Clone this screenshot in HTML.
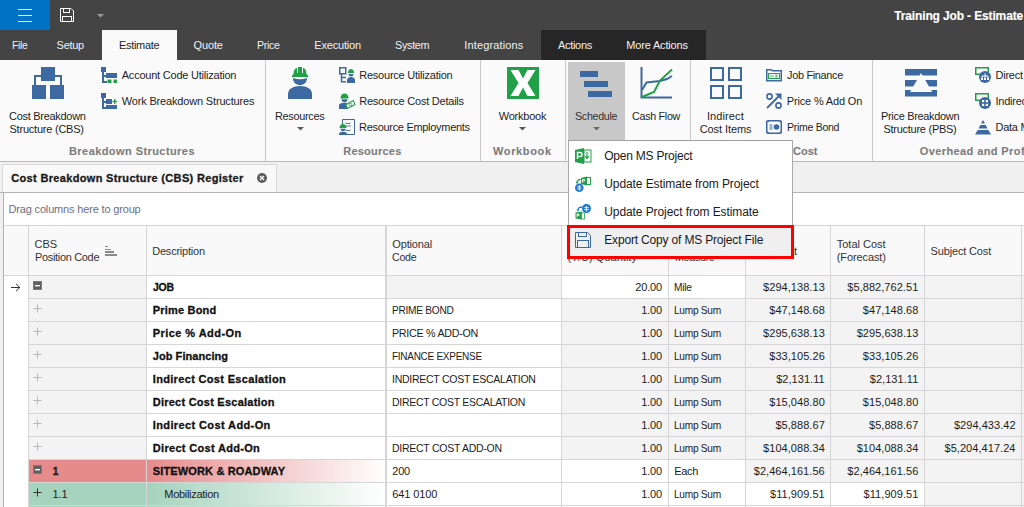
<!DOCTYPE html><html><head><meta charset="utf-8"><style>
html,body{margin:0;padding:0;width:1024px;height:507px;overflow:hidden;background:#f9f9f9;}
body{position:relative;font-family:"Liberation Sans", sans-serif;}
.t{position:absolute;white-space:nowrap;}
.b{position:absolute;}
.s{position:absolute;overflow:visible;}
</style></head><body>
<div class="b" style="left:0px;top:0px;width:1024px;height:60px;background:#444444;"></div>
<div class="b" style="left:0px;top:0px;width:50px;height:30px;background:#0072c6;"></div>
<div class="b" style="left:18px;top:9px;width:14px;height:1px;background:#ffffff;"></div>
<div class="b" style="left:18px;top:15px;width:14px;height:1px;background:#ffffff;"></div>
<div class="b" style="left:18px;top:21px;width:14px;height:1px;background:#ffffff;"></div>
<svg class="s" style="left:60px;top:8px" width="14" height="14" viewBox="0 0 14 14"><path d="M0.5 0.5H11L13.5 3V13.5H0.5Z" fill="none" stroke="#fff" stroke-width="1"/><rect x="3.5" y="0.5" width="6" height="4" fill="none" stroke="#fff"/><rect x="2.5" y="8.5" width="9" height="5" fill="none" stroke="#fff"/></svg>
<svg class="s" style="left:97px;top:14px" width="7" height="4" viewBox="0 0 7 4"><path d="M0 0H7L3.5 3.5Z" fill="#9a9a9a"/></svg>
<div class="t" style="left:894.25px;top:9.64px;font-size:12px;line-height:12px;font-weight:bold;-webkit-text-stroke:0.15px #ffffff;color:#ffffff;letter-spacing:-0.14px;">Training Job - Estimate</div>
<div class="b" style="left:541px;top:30px;width:165px;height:30px;background:#262626;"></div>
<div class="b" style="left:102px;top:30px;width:75px;height:30px;background:#fafafa;"></div>
<div class="t" style="left:11.50px;top:39.69px;font-size:11px;line-height:11px;color:#f2f2f2;letter-spacing:-0.3px;transform:scaleX(0.9377);transform-origin:0.00px 0;">File</div>
<div class="t" style="left:56.60px;top:39.69px;font-size:11px;line-height:11px;color:#f2f2f2;letter-spacing:-0.287px;">Setup</div>
<div class="t" style="left:193.60px;top:39.69px;font-size:11px;line-height:11px;color:#f2f2f2;letter-spacing:-0.15px;">Quote</div>
<div class="t" style="left:257.00px;top:39.69px;font-size:11px;line-height:11px;color:#f2f2f2;letter-spacing:-0.3px;transform:scaleX(0.9613);transform-origin:0.00px 0;">Price</div>
<div class="t" style="left:314.25px;top:39.69px;font-size:11px;line-height:11px;color:#f2f2f2;letter-spacing:-0.188px;">Execution</div>
<div class="t" style="left:395.25px;top:39.69px;font-size:11px;line-height:11px;color:#f2f2f2;letter-spacing:-0.3px;transform:scaleX(0.9822);transform-origin:0.00px 0;">System</div>
<div class="t" style="left:464.25px;top:39.69px;font-size:11px;line-height:11px;color:#f2f2f2;letter-spacing:0.136px;">Integrations</div>
<div class="t" style="left:557.75px;top:39.69px;font-size:11px;line-height:11px;color:#f2f2f2;letter-spacing:-0.3px;transform:scaleX(0.9978);transform-origin:0.00px 0;">Actions</div>
<div class="t" style="left:626.25px;top:39.69px;font-size:11px;line-height:11px;color:#f2f2f2;letter-spacing:-0.17px;">More Actions</div>
<div class="t" style="left:118.50px;top:39.69px;font-size:11px;line-height:11px;color:#1e1e1e;letter-spacing:-0.3px;transform:scaleX(0.9963);transform-origin:0.00px 0;">Estimate</div>
<div class="b" style="left:0px;top:60px;width:1024px;height:101px;background:#fafafa;"></div>
<div class="b" style="left:0px;top:161px;width:1024px;height:1px;background:#b9b9b9;"></div>
<div class="b" style="left:265px;top:60px;width:1px;height:101px;background:#c9c9c9;"></div>
<div class="b" style="left:480px;top:60px;width:1px;height:101px;background:#c9c9c9;"></div>
<div class="b" style="left:565px;top:60px;width:1px;height:101px;background:#c9c9c9;"></div>
<div class="b" style="left:690px;top:60px;width:1px;height:101px;background:#c9c9c9;"></div>
<div class="b" style="left:872px;top:60px;width:1px;height:101px;background:#c9c9c9;"></div>
<div class="t" style="left:69.00px;top:145.89px;font-size:11px;line-height:11px;font-weight:bold;-webkit-text-stroke:0.1px #7d7d7d;color:#7d7d7d;letter-spacing:0.428px;">Breakdown Structures</div>
<div class="t" style="left:343.25px;top:145.89px;font-size:11px;line-height:11px;font-weight:bold;-webkit-text-stroke:0.1px #7d7d7d;color:#7d7d7d;letter-spacing:0.219px;">Resources</div>
<div class="t" style="left:493.00px;top:145.89px;font-size:11px;line-height:11px;font-weight:bold;-webkit-text-stroke:0.1px #7d7d7d;color:#7d7d7d;letter-spacing:0.636px;">Workbook</div>
<div class="t" style="left:604.00px;top:145.89px;font-size:11px;line-height:11px;font-weight:bold;-webkit-text-stroke:0.1px #7d7d7d;color:#7d7d7d;letter-spacing:0px;">Schedule</div>
<div class="t" style="left:793.00px;top:145.89px;font-size:11px;line-height:11px;font-weight:bold;-webkit-text-stroke:0.1px #7d7d7d;color:#7d7d7d;letter-spacing:0.0px;">Cost</div>
<div class="t" style="left:740.00px;top:145.89px;font-size:11px;line-height:11px;font-weight:bold;-webkit-text-stroke:0.1px #7d7d7d;color:#7d7d7d;letter-spacing:0px;">Job</div>
<div class="t" style="left:919.75px;top:145.89px;font-size:11px;line-height:11px;font-weight:bold;-webkit-text-stroke:0.1px #7d7d7d;color:#7d7d7d;letter-spacing:0.4px;">Overhead and Profit</div>
<svg class="s" style="left:32px;top:67px" width="32" height="32" viewBox="0 0 32 32"><rect x="9" y="0" width="14" height="14" fill="#3d69a2"/><path d="M3 18V9H29V18" fill="none" stroke="#3d69a2" stroke-width="2"/><rect x="0" y="18" width="14" height="14" fill="#3d69a2"/><rect x="18" y="18" width="14" height="14" fill="#3d69a2"/></svg>
<div class="t" style="left:9.00px;top:110.69px;font-size:11px;line-height:11px;color:#1e1e1e;letter-spacing:-0.288px;">Cost Breakdown</div>
<div class="t" style="left:9.50px;top:123.69px;font-size:11px;line-height:11px;color:#1e1e1e;letter-spacing:-0.223px;">Structure (CBS)</div>
<svg class="s" style="left:101px;top:67px" width="16" height="16" viewBox="0 0 16 16"><rect x="0" y="0" width="5" height="5" fill="#3d69a2"/><path d="M2 5V15H6M2 9H6" stroke="#3d69a2" stroke-width="2" fill="none"/><rect x="5" y="6" width="11" height="5" fill="#3d69a2"/><rect x="6.5" y="12.5" width="4" height="3.5" fill="#22a048"/><rect x="12.5" y="12.5" width="3.5" height="3.5" fill="#22a048"/></svg>
<div class="t" style="left:121.75px;top:69.69px;font-size:11px;line-height:11px;color:#1e1e1e;letter-spacing:-0.223px;">Account Code Utilization</div>
<svg class="s" style="left:101px;top:93px" width="16" height="16" viewBox="0 0 16 16"><rect x="0" y="0" width="5" height="5" fill="#3d69a2"/><path d="M2 5V15H6M2 9H6" stroke="#3d69a2" stroke-width="2" fill="none"/><rect x="5" y="6" width="6" height="5" fill="#3d69a2"/><rect x="5" y="12" width="11" height="4" fill="#3d69a2"/><path d="M11.5 8.5H16M13.75 6V11" stroke="#22a048" stroke-width="1.3"/></svg>
<div class="t" style="left:121.75px;top:95.89px;font-size:11px;line-height:11px;color:#1e1e1e;letter-spacing:-0.167px;">Work Breakdown Structures</div>
<svg class="s" style="left:288px;top:67px" width="24" height="32" viewBox="0 0 24 32"><path d="M5.5 7C5.5 3.5 7 1.5 9 0.8V6H10V0H14V6H15V0.8C17 1.5 18.5 3.5 18.5 7L20 8.5V10H4V8.5Z" fill="#22a048"/><path d="M5 11Q12 13.5 19 11C19 15.5 16 18 12 18C8 18 5 15.5 5 11Z" fill="#3d69a2"/><path d="M0 32V27C0 22 5 19 12 19C19 19 24 22 24 27V32Z" fill="#3d69a2"/></svg>
<div class="t" style="left:274.70px;top:110.69px;font-size:11px;line-height:11px;color:#1e1e1e;letter-spacing:-0.3px;transform:scaleX(0.9895);transform-origin:0.00px 0;">Resources</div>
<svg class="s" style="left:297px;top:127px" width="7" height="4" viewBox="0 0 7 4"><path d="M0 0H7L3.5 3.5Z" fill="#5a5a5a"/></svg>
<svg class="s" style="left:339px;top:67px" width="16" height="16" viewBox="0 0 16 16"><rect x="0.75" y="0.75" width="6" height="6" fill="none" stroke="#3d69a2" stroke-width="1.5"/><path d="M2.5 7V15.5M2.5 10.5H7M2.5 14.75H7" stroke="#3d69a2" stroke-width="1.5" fill="none"/><path d="M9 6C9 3 10.5 2 12 2C13.5 2 15 3 15 6Z" fill="#22a048"/><path d="M9.5 7H14.5C14.5 8.5 13.5 9.5 12 9.5C10.5 9.5 9.5 8.5 9.5 7Z" fill="#3d69a2"/><path d="M8 16V13C8 11 10 10 12 10C14 10 16 11 16 13V16Z" fill="#3d69a2"/></svg>
<div class="t" style="left:359.25px;top:69.69px;font-size:11px;line-height:11px;color:#1e1e1e;letter-spacing:-0.23px;">Resource Utilization</div>
<svg class="s" style="left:339px;top:93px" width="16" height="16" viewBox="0 0 16 16"><path d="M1.5 5.5C1.5 2.2 3.2 0.5 5.5 0.5C7.8 0.5 9.5 2.2 9.5 5.5Z" fill="#22a048"/><path d="M2.5 6.3H8.5C8.5 8 7.3 9.3 5.5 9.3C3.7 9.3 2.5 8 2.5 6.3Z" fill="#3d69a2"/><path d="M0 16V12.5C0 10.8 2 9.8 5.5 9.8C6.5 9.8 7.3 9.9 8 10.2V16Z" fill="#3d69a2"/><path d="M6.8 11.8L14.2 7.6L16 11.6L8.6 15.6Z" fill="#fff" stroke="#22a048" stroke-width="1.1"/><circle cx="11.4" cy="11.6" r="1.4" fill="none" stroke="#22a048" stroke-width="0.9"/></svg>
<div class="t" style="left:359.25px;top:95.89px;font-size:11px;line-height:11px;color:#1e1e1e;letter-spacing:-0.231px;">Resource Cost Details</div>
<svg class="s" style="left:339px;top:119px" width="16" height="16" viewBox="0 0 16 16"><path d="M3.5 5V0.5H15.5V15.5H8" fill="none" stroke="#3d69a2" stroke-width="1"/><path d="M7 3.5V4.5H11V3.5M7 7H12M7 10.5V11.5H11V10.5" stroke="#5f7fae" stroke-width="1" fill="none"/><path d="M0.5 9C0.5 6.5 2 5 4 5C6 5 7.5 6.5 7.5 9Z" fill="#22a048"/><path d="M1.5 9.8H6.5C6.5 11.2 5.5 12.2 4 12.2C2.5 12.2 1.5 11.2 1.5 9.8Z" fill="#3d69a2"/><path d="M0 16V14.8C0 13.5 1.8 12.8 4 12.8C6.2 12.8 8 13.5 8 14.8V16Z" fill="#3d69a2"/></svg>
<div class="t" style="left:359.25px;top:121.89px;font-size:11px;line-height:11px;color:#1e1e1e;letter-spacing:-0.3px;transform:scaleX(0.9995);transform-origin:0.00px 0;">Resource Employments</div>
<svg class="s" style="left:507px;top:67px" width="32" height="32" viewBox="0 0 32 32"><rect x="0" y="0" width="32" height="32" fill="#22a048"/><path d="M3.5 3H11.5L16 11.5L20.5 3H28.5L20.5 16L28.5 29H20.5L16 20.5L11.5 29H3.5L11.5 16Z" fill="#fff"/></svg>
<div class="t" style="left:498.80px;top:110.69px;font-size:11px;line-height:11px;color:#1e1e1e;letter-spacing:-0.243px;">Workbook</div>
<svg class="s" style="left:519px;top:127px" width="7" height="4" viewBox="0 0 7 4"><path d="M0 0H7L3.5 3.5Z" fill="#5a5a5a"/></svg>
<div class="b" style="left:568px;top:62px;width:57px;height:80px;background:#c8c8c8;"></div>
<svg class="s" style="left:580px;top:71px" width="32" height="26" viewBox="0 0 32 26"><rect x="0" y="0" width="18" height="6" fill="#3d69a2"/><rect x="4" y="10" width="24" height="6" fill="#3d69a2"/><rect x="8" y="20" width="24" height="6" fill="#3d69a2"/></svg>
<div class="t" style="left:574.70px;top:110.69px;font-size:11px;line-height:11px;color:#333;letter-spacing:-0.3px;transform:scaleX(0.9709);transform-origin:0.00px 0;">Schedule</div>
<svg class="s" style="left:593px;top:127px" width="7" height="4" viewBox="0 0 7 4"><path d="M0 0H7L3.5 3.5Z" fill="#6a6a6a"/></svg>
<svg class="s" style="left:640px;top:67px" width="33" height="32" viewBox="0 0 33 32"><path d="M1.5 0V30.5H32" fill="none" stroke="#3d69a2" stroke-width="2"/><path d="M2 23L6.5 15.5L20 14L27 12L32 9" fill="none" stroke="#3d69a2" stroke-width="2"/><path d="M2 30L14 25L20 13.5L32 2.5" fill="none" stroke="#22a048" stroke-width="2"/></svg>
<div class="t" style="left:631.90px;top:110.69px;font-size:11px;line-height:11px;color:#1e1e1e;letter-spacing:-0.3px;transform:scaleX(0.9758);transform-origin:0.00px 0;">Cash Flow</div>
<svg class="s" style="left:710px;top:67px" width="32" height="32" viewBox="0 0 32 32"><rect x="1" y="1" width="12" height="12" fill="none" stroke="#3d69a2" stroke-width="2"/><rect x="19" y="1" width="12" height="12" fill="none" stroke="#3d69a2" stroke-width="2"/><rect x="1" y="19" width="12" height="12" fill="none" stroke="#3d69a2" stroke-width="2"/><rect x="19" y="19" width="12" height="12" fill="none" stroke="#3d69a2" stroke-width="2"/></svg>
<div class="t" style="left:706.90px;top:110.69px;font-size:11px;line-height:11px;color:#1e1e1e;letter-spacing:0.104px;">Indirect</div>
<div class="t" style="left:699.70px;top:123.69px;font-size:11px;line-height:11px;color:#1e1e1e;letter-spacing:-0.081px;">Cost Items</div>
<svg class="s" style="left:766px;top:67px" width="16" height="16" viewBox="0 0 16 16"><path d="M0.75 13.75V2.75H5.5L6.5 3.75H15.25V13.75Z" fill="none" stroke="#3d69a2" stroke-width="1.5"/><rect x="2.5" y="6.5" width="11" height="5" fill="none" stroke="#22a048" stroke-width="1"/><path d="M5 8V10M7 8V10M9 8H11V10H9" stroke="#22a048" stroke-width="0.8" fill="none"/></svg>
<div class="t" style="left:786.75px;top:69.69px;font-size:11px;line-height:11px;color:#1e1e1e;letter-spacing:-0.3px;transform:scaleX(0.9890);transform-origin:0.00px 0;">Job Finance</div>
<svg class="s" style="left:766px;top:93px" width="16" height="16" viewBox="0 0 16 16"><circle cx="3.5" cy="3.5" r="2.6" fill="none" stroke="#3d69a2" stroke-width="1.6"/><circle cx="12.5" cy="12.5" r="2.6" fill="none" stroke="#3d69a2" stroke-width="1.6"/><path d="M1 15L14.5 1.5" fill="none" stroke="#3d69a2" stroke-width="1.8"/><path d="M9 0.5H15.5V7Z" fill="#3d69a2"/></svg>
<div class="t" style="left:786.75px;top:95.89px;font-size:11px;line-height:11px;color:#1e1e1e;letter-spacing:-0.163px;">Price % Add On</div>
<svg class="s" style="left:766px;top:119px" width="16" height="16" viewBox="0 0 16 16"><path d="M2 1.75H14A0.5 0.5 0 0 0 14.25 2V2.5H15.25V13.5H14.25V14A0.5 0.5 0 0 0 14 14.25H2V13.5H0.75V2.5H2Z" fill="none" stroke="#3d69a2" stroke-width="1.5"/><circle cx="10.5" cy="8" r="2.8" fill="#3d69a2"/><path d="M3.5 6H6.5M3.5 8H6.5M3.5 10H6.5" stroke="#3d69a2" stroke-width="1"/></svg>
<div class="t" style="left:786.75px;top:121.89px;font-size:11px;line-height:11px;color:#1e1e1e;letter-spacing:-0.3px;transform:scaleX(0.9580);transform-origin:0.00px 0;">Prime Bond</div>
<svg class="s" style="left:905px;top:69px" width="32" height="28" viewBox="0 0 32 28"><rect x="0" y="0" width="32" height="6.5" fill="#3d69a2"/><rect x="0" y="11" width="32" height="6.5" fill="#3d69a2"/><rect x="0" y="21" width="32" height="6.5" fill="#3d69a2"/><path d="M16 4L27.25 23H5Z" fill="#f8f8f8"/></svg>
<div class="t" style="left:881.25px;top:110.69px;font-size:11px;line-height:11px;color:#1e1e1e;letter-spacing:-0.3px;transform:scaleX(0.9946);transform-origin:0.00px 0;">Price Breakdown</div>
<div class="t" style="left:883.50px;top:123.69px;font-size:11px;line-height:11px;color:#1e1e1e;letter-spacing:-0.268px;">Structure (PBS)</div>
<svg class="s" style="left:975px;top:67px" width="16" height="16" viewBox="0 0 16 16"><rect x="0.75" y="0.75" width="12.5" height="6.5" fill="none" stroke="#22a048" stroke-width="1.5"/><circle cx="10" cy="10" r="6" fill="#3d69a2"/><path d="M10 6.5V9M7 9H13M7 9V11M10 9V11M13 9V11" stroke="#fff" stroke-width="1" fill="none"/><rect x="6" y="11" width="2" height="2" fill="#fff"/><rect x="9" y="11" width="2" height="2" fill="#fff"/><rect x="12" y="11" width="2" height="2" fill="#fff"/></svg>
<div class="t" style="left:995.50px;top:69.69px;font-size:11px;line-height:11px;color:#1e1e1e;letter-spacing:-0.25px;">Direct Cost Add-On</div>
<svg class="s" style="left:975px;top:93px" width="16" height="16" viewBox="0 0 16 16"><rect x="0.75" y="0.75" width="12.5" height="6.5" fill="none" stroke="#22a048" stroke-width="1.5"/><circle cx="10" cy="10" r="6" fill="#3d69a2"/><rect x="7" y="7" width="2.2" height="2.2" fill="#fff"/><rect x="10.8" y="7" width="2.2" height="2.2" fill="#fff"/><rect x="7" y="10.8" width="2.2" height="2.2" fill="#fff"/><rect x="10.8" y="10.8" width="2.2" height="2.2" fill="#fff"/></svg>
<div class="t" style="left:995.50px;top:95.89px;font-size:11px;line-height:11px;color:#1e1e1e;letter-spacing:-0.25px;">Indirect Cost Add-On</div>
<svg class="s" style="left:975px;top:119px" width="16" height="16" viewBox="0 0 16 16"><path d="M8 1L10 4.5H6Z M5.3 6H10.7L12.5 9.5H3.5Z M2.7 11H13.3L16 15.5H0Z" fill="#3d69a2"/></svg>
<div class="t" style="left:995.50px;top:121.89px;font-size:11px;line-height:11px;color:#1e1e1e;letter-spacing:-0.25px;">Data Model</div>
<div class="b" style="left:0px;top:162px;width:1024px;height:31px;background:#f0f0f0;"></div>
<div class="b" style="left:2px;top:164px;width:275px;height:29px;background:#f9f9f9;box-sizing:border-box;border:1px solid #d9d9d9;border-bottom:none;"></div>
<div class="b" style="left:0px;top:192px;width:1024px;height:1px;background:#b4b4b4;"></div>
<div class="t" style="left:11.25px;top:172.69px;font-size:11px;line-height:11px;font-weight:bold;-webkit-text-stroke:0.3px #1a1a1a;color:#1a1a1a;letter-spacing:0.332px;">Cost Breakdown Structure (CBS) Register</div>
<svg class="s" style="left:257px;top:173px" width="10" height="10" viewBox="0 0 10 10"><circle cx="5" cy="5" r="5" fill="#5c5c5c"/><path d="M3 3L7 7M7 3L3 7" stroke="#fff" stroke-width="1.3"/></svg>
<div class="b" style="left:0px;top:193px;width:1024px;height:314px;background:#f0f0f0;"></div>
<div class="b" style="left:3px;top:193px;width:1021px;height:314px;background:#ffffff;box-sizing:border-box;border-left:1px solid #b0b0b0;"></div>
<div class="t" style="left:8.50px;top:204.44px;font-size:11px;line-height:11px;color:#6e6e84;letter-spacing:-0.165px;">Drag columns here to group</div>
<div class="b" style="left:4px;top:225px;width:1020px;height:1px;background:#d6d6d6;"></div>
<div class="b" style="left:4px;top:226px;width:1020px;height:49px;background:#f9f9f9;"></div>
<div class="b" style="left:4px;top:275px;width:1020px;height:1px;background:#d6d6d6;"></div>
<div class="t" style="left:34.50px;top:238.69px;font-size:11px;line-height:11px;color:#333333;letter-spacing:0px;">CBS</div>
<div class="t" style="left:34.50px;top:251.69px;font-size:11px;line-height:11px;color:#333333;letter-spacing:-0.3px;transform:scaleX(0.9938);transform-origin:0.00px 0;">Position Code</div>
<div class="b" style="left:105px;top:246px;width:3px;height:1px;background:#8a8a8a;"></div>
<div class="b" style="left:105px;top:249px;width:6px;height:1px;background:#8a8a8a;"></div>
<div class="b" style="left:105px;top:251px;width:9px;height:2px;background:#8a8a8a;"></div>
<div class="b" style="left:105px;top:254px;width:12px;height:2px;background:#8a8a8a;"></div>
<div class="t" style="left:152.25px;top:245.69px;font-size:11px;line-height:11px;color:#333333;letter-spacing:-0.225px;">Description</div>
<div class="t" style="left:392.25px;top:238.69px;font-size:11px;line-height:11px;color:#333333;letter-spacing:-0.143px;">Optional</div>
<div class="t" style="left:392.25px;top:251.69px;font-size:11px;line-height:11px;color:#333333;letter-spacing:-0.3px;transform:scaleX(0.9665);transform-origin:0.00px 0;">Code</div>
<div class="t" style="left:567.00px;top:238.69px;font-size:11px;line-height:11px;color:#333333;letter-spacing:-0.25px;">Quantity</div>
<div class="t" style="left:567.50px;top:251.69px;font-size:11px;line-height:11px;color:#333333;letter-spacing:0.029px;">(T/U) Quantity</div>
<div class="t" style="left:674.00px;top:238.69px;font-size:11px;line-height:11px;color:#333333;letter-spacing:-0.25px;">Unit of</div>
<div class="t" style="left:674.75px;top:251.69px;font-size:11px;line-height:11px;color:#333333;letter-spacing:-0.3px;transform:scaleX(0.9707);transform-origin:0.00px 0;">Measure</div>
<div class="t" style="left:753.75px;top:245.69px;font-size:11px;line-height:11px;color:#333333;letter-spacing:-0.25px;">Unit Cost</div>
<div class="t" style="left:836.75px;top:238.69px;font-size:11px;line-height:11px;color:#333333;letter-spacing:-0.014px;">Total Cost</div>
<div class="t" style="left:836.75px;top:251.69px;font-size:11px;line-height:11px;color:#333333;letter-spacing:-0.097px;">(Forecast)</div>
<div class="t" style="left:930.50px;top:245.69px;font-size:11px;line-height:11px;color:#333333;letter-spacing:-0.148px;">Subject Cost</div>
<div class="b" style="left:29px;top:276px;width:117px;height:22px;background:#f3f3f3;"></div>
<div class="b" style="left:147px;top:276px;width:239px;height:22px;background:#ffffff;"></div>
<div class="b" style="left:387px;top:276px;width:174px;height:22px;background:#f3f3f3;"></div>
<div class="b" style="left:562px;top:276px;width:106px;height:22px;background:#ffffff;"></div>
<div class="b" style="left:669px;top:276px;width:76px;height:22px;background:#ffffff;"></div>
<div class="b" style="left:746px;top:276px;width:84px;height:22px;background:#f3f3f3;"></div>
<div class="b" style="left:831px;top:276px;width:93px;height:22px;background:#f3f3f3;"></div>
<div class="b" style="left:925px;top:276px;width:96px;height:22px;background:#f3f3f3;"></div>
<div class="b" style="left:1022px;top:276px;width:2px;height:22px;background:#f3f3f3;"></div>
<div class="b" style="left:28px;top:298px;width:996px;height:1px;background:#d6d6d6;"></div>
<svg class="s" style="left:11px;top:283px" width="10" height="9" viewBox="0 0 10 9"><path d="M0 4.5H9M5 0.8L8.8 4.5L5 8.2" fill="none" stroke="#333" stroke-width="1"/></svg>
<svg class="s" style="left:33px;top:281px" width="9" height="9" viewBox="0 0 9 9"><rect x="0.5" y="0.5" width="8" height="8" fill="#5e5e5e" stroke="#7a7a7a"/><rect x="2" y="4" width="5" height="1.4" fill="#fff"/></svg>
<div class="t" style="left:152.75px;top:281.69px;font-size:11px;line-height:11px;font-weight:bold;-webkit-text-stroke:0.3px #111;color:#111;letter-spacing:-0.3px;transform:scaleX(0.9535);transform-origin:0.00px 0;">JOB</div>
<div class="t" style="left:635.30px;top:281.69px;font-size:11px;line-height:11px;color:#1c1c1c;letter-spacing:-0.2px;">20.00</div>
<div class="t" style="left:674.25px;top:281.69px;font-size:11px;line-height:11px;color:#1c1c1c;letter-spacing:-0.3px;transform:scaleX(0.9233);transform-origin:0.00px 0;">Mile</div>
<div class="t" style="left:763.08px;top:281.69px;font-size:11px;line-height:11px;color:#1c1c1c;letter-spacing:0.05px;">$294,138.13</div>
<div class="t" style="left:847.32px;top:281.69px;font-size:11px;line-height:11px;color:#1c1c1c;letter-spacing:0.05px;">$5,882,762.51</div>
<div class="b" style="left:29px;top:299px;width:117px;height:22px;background:#f3f3f3;"></div>
<div class="b" style="left:147px;top:299px;width:239px;height:22px;background:#ffffff;"></div>
<div class="b" style="left:387px;top:299px;width:174px;height:22px;background:#ffffff;"></div>
<div class="b" style="left:562px;top:299px;width:106px;height:22px;background:#f3f3f3;"></div>
<div class="b" style="left:669px;top:299px;width:76px;height:22px;background:#f3f3f3;"></div>
<div class="b" style="left:746px;top:299px;width:84px;height:22px;background:#f3f3f3;"></div>
<div class="b" style="left:831px;top:299px;width:93px;height:22px;background:#f3f3f3;"></div>
<div class="b" style="left:925px;top:299px;width:96px;height:22px;background:#f3f3f3;"></div>
<div class="b" style="left:1022px;top:299px;width:2px;height:22px;background:#f3f3f3;"></div>
<div class="b" style="left:28px;top:321px;width:996px;height:1px;background:#d6d6d6;"></div>
<svg class="s" style="left:33px;top:304px" width="9" height="9" viewBox="0 0 9 9"><path d="M4.5 0.5V8.5M0.5 4.5H8.5" stroke="#b8b8b8" stroke-width="1"/></svg>
<div class="t" style="left:152.75px;top:304.69px;font-size:11px;line-height:11px;font-weight:bold;-webkit-text-stroke:0.3px #111;color:#111;letter-spacing:0.194px;">Prime Bond</div>
<div class="t" style="left:392.25px;top:304.69px;font-size:11px;line-height:11px;color:#1c1c1c;letter-spacing:-0.3px;transform:scaleX(0.9227);transform-origin:0.00px 0;">PRIME BOND</div>
<div class="t" style="left:641.23px;top:304.69px;font-size:11px;line-height:11px;color:#1c1c1c;letter-spacing:-0.2px;">1.00</div>
<div class="t" style="left:674.25px;top:304.69px;font-size:11px;line-height:11px;color:#1c1c1c;letter-spacing:-0.3px;transform:scaleX(0.9238);transform-origin:0.00px 0;">Lump Sum</div>
<div class="t" style="left:769.25px;top:304.69px;font-size:11px;line-height:11px;color:#1c1c1c;letter-spacing:0.05px;">$47,148.68</div>
<div class="t" style="left:862.85px;top:304.69px;font-size:11px;line-height:11px;color:#1c1c1c;letter-spacing:0.05px;">$47,148.68</div>
<div class="b" style="left:29px;top:322px;width:117px;height:22px;background:#f3f3f3;"></div>
<div class="b" style="left:147px;top:322px;width:239px;height:22px;background:#ffffff;"></div>
<div class="b" style="left:387px;top:322px;width:174px;height:22px;background:#ffffff;"></div>
<div class="b" style="left:562px;top:322px;width:106px;height:22px;background:#f3f3f3;"></div>
<div class="b" style="left:669px;top:322px;width:76px;height:22px;background:#f3f3f3;"></div>
<div class="b" style="left:746px;top:322px;width:84px;height:22px;background:#f3f3f3;"></div>
<div class="b" style="left:831px;top:322px;width:93px;height:22px;background:#f3f3f3;"></div>
<div class="b" style="left:925px;top:322px;width:96px;height:22px;background:#f3f3f3;"></div>
<div class="b" style="left:1022px;top:322px;width:2px;height:22px;background:#f3f3f3;"></div>
<div class="b" style="left:28px;top:344px;width:996px;height:1px;background:#d6d6d6;"></div>
<svg class="s" style="left:33px;top:327px" width="9" height="9" viewBox="0 0 9 9"><path d="M4.5 0.5V8.5M0.5 4.5H8.5" stroke="#b8b8b8" stroke-width="1"/></svg>
<div class="t" style="left:152.75px;top:327.69px;font-size:11px;line-height:11px;font-weight:bold;-webkit-text-stroke:0.3px #111;color:#111;letter-spacing:0.442px;">Price % Add-On</div>
<div class="t" style="left:392.25px;top:327.69px;font-size:11px;line-height:11px;color:#1c1c1c;letter-spacing:-0.3px;transform:scaleX(0.9762);transform-origin:0.00px 0;">PRICE % ADD-ON</div>
<div class="t" style="left:641.23px;top:327.69px;font-size:11px;line-height:11px;color:#1c1c1c;letter-spacing:-0.2px;">1.00</div>
<div class="t" style="left:674.25px;top:327.69px;font-size:11px;line-height:11px;color:#1c1c1c;letter-spacing:-0.3px;transform:scaleX(0.9238);transform-origin:0.00px 0;">Lump Sum</div>
<div class="t" style="left:763.08px;top:327.69px;font-size:11px;line-height:11px;color:#1c1c1c;letter-spacing:0.05px;">$295,638.13</div>
<div class="t" style="left:856.67px;top:327.69px;font-size:11px;line-height:11px;color:#1c1c1c;letter-spacing:0.05px;">$295,638.13</div>
<div class="b" style="left:29px;top:345px;width:117px;height:22px;background:#f3f3f3;"></div>
<div class="b" style="left:147px;top:345px;width:239px;height:22px;background:#ffffff;"></div>
<div class="b" style="left:387px;top:345px;width:174px;height:22px;background:#ffffff;"></div>
<div class="b" style="left:562px;top:345px;width:106px;height:22px;background:#f3f3f3;"></div>
<div class="b" style="left:669px;top:345px;width:76px;height:22px;background:#f3f3f3;"></div>
<div class="b" style="left:746px;top:345px;width:84px;height:22px;background:#f3f3f3;"></div>
<div class="b" style="left:831px;top:345px;width:93px;height:22px;background:#f3f3f3;"></div>
<div class="b" style="left:925px;top:345px;width:96px;height:22px;background:#f3f3f3;"></div>
<div class="b" style="left:1022px;top:345px;width:2px;height:22px;background:#f3f3f3;"></div>
<div class="b" style="left:28px;top:367px;width:996px;height:1px;background:#d6d6d6;"></div>
<svg class="s" style="left:33px;top:350px" width="9" height="9" viewBox="0 0 9 9"><path d="M4.5 0.5V8.5M0.5 4.5H8.5" stroke="#b8b8b8" stroke-width="1"/></svg>
<div class="t" style="left:152.75px;top:350.69px;font-size:11px;line-height:11px;font-weight:bold;-webkit-text-stroke:0.3px #111;color:#111;letter-spacing:0.062px;">Job Financing</div>
<div class="t" style="left:392.25px;top:350.69px;font-size:11px;line-height:11px;color:#1c1c1c;letter-spacing:-0.3px;transform:scaleX(0.9086);transform-origin:0.00px 0;">FINANCE EXPENSE</div>
<div class="t" style="left:641.23px;top:350.69px;font-size:11px;line-height:11px;color:#1c1c1c;letter-spacing:-0.2px;">1.00</div>
<div class="t" style="left:674.25px;top:350.69px;font-size:11px;line-height:11px;color:#1c1c1c;letter-spacing:-0.3px;transform:scaleX(0.9238);transform-origin:0.00px 0;">Lump Sum</div>
<div class="t" style="left:769.25px;top:350.69px;font-size:11px;line-height:11px;color:#1c1c1c;letter-spacing:0.05px;">$33,105.26</div>
<div class="t" style="left:862.85px;top:350.69px;font-size:11px;line-height:11px;color:#1c1c1c;letter-spacing:0.05px;">$33,105.26</div>
<div class="b" style="left:29px;top:368px;width:117px;height:22px;background:#f3f3f3;"></div>
<div class="b" style="left:147px;top:368px;width:239px;height:22px;background:#ffffff;"></div>
<div class="b" style="left:387px;top:368px;width:174px;height:22px;background:#ffffff;"></div>
<div class="b" style="left:562px;top:368px;width:106px;height:22px;background:#f3f3f3;"></div>
<div class="b" style="left:669px;top:368px;width:76px;height:22px;background:#f3f3f3;"></div>
<div class="b" style="left:746px;top:368px;width:84px;height:22px;background:#f3f3f3;"></div>
<div class="b" style="left:831px;top:368px;width:93px;height:22px;background:#f3f3f3;"></div>
<div class="b" style="left:925px;top:368px;width:96px;height:22px;background:#f3f3f3;"></div>
<div class="b" style="left:1022px;top:368px;width:2px;height:22px;background:#f3f3f3;"></div>
<div class="b" style="left:28px;top:390px;width:996px;height:1px;background:#d6d6d6;"></div>
<svg class="s" style="left:33px;top:373px" width="9" height="9" viewBox="0 0 9 9"><path d="M4.5 0.5V8.5M0.5 4.5H8.5" stroke="#b8b8b8" stroke-width="1"/></svg>
<div class="t" style="left:152.75px;top:373.69px;font-size:11px;line-height:11px;font-weight:bold;-webkit-text-stroke:0.3px #111;color:#111;letter-spacing:0.33px;">Indirect Cost Escalation</div>
<div class="t" style="left:392.25px;top:373.69px;font-size:11px;line-height:11px;color:#1c1c1c;letter-spacing:-0.3px;transform:scaleX(0.9582);transform-origin:0.00px 0;">INDIRECT COST ESCALATION</div>
<div class="t" style="left:641.23px;top:373.69px;font-size:11px;line-height:11px;color:#1c1c1c;letter-spacing:-0.2px;">1.00</div>
<div class="t" style="left:674.25px;top:373.69px;font-size:11px;line-height:11px;color:#1c1c1c;letter-spacing:-0.3px;transform:scaleX(0.9238);transform-origin:0.00px 0;">Lump Sum</div>
<div class="t" style="left:776.18px;top:373.69px;font-size:11px;line-height:11px;color:#1c1c1c;letter-spacing:0.05px;">$2,131.11</div>
<div class="t" style="left:869.77px;top:373.69px;font-size:11px;line-height:11px;color:#1c1c1c;letter-spacing:0.05px;">$2,131.11</div>
<div class="b" style="left:29px;top:391px;width:117px;height:22px;background:#f3f3f3;"></div>
<div class="b" style="left:147px;top:391px;width:239px;height:22px;background:#ffffff;"></div>
<div class="b" style="left:387px;top:391px;width:174px;height:22px;background:#ffffff;"></div>
<div class="b" style="left:562px;top:391px;width:106px;height:22px;background:#f3f3f3;"></div>
<div class="b" style="left:669px;top:391px;width:76px;height:22px;background:#f3f3f3;"></div>
<div class="b" style="left:746px;top:391px;width:84px;height:22px;background:#f3f3f3;"></div>
<div class="b" style="left:831px;top:391px;width:93px;height:22px;background:#f3f3f3;"></div>
<div class="b" style="left:925px;top:391px;width:96px;height:22px;background:#f3f3f3;"></div>
<div class="b" style="left:1022px;top:391px;width:2px;height:22px;background:#f3f3f3;"></div>
<div class="b" style="left:28px;top:413px;width:996px;height:1px;background:#d6d6d6;"></div>
<svg class="s" style="left:33px;top:396px" width="9" height="9" viewBox="0 0 9 9"><path d="M4.5 0.5V8.5M0.5 4.5H8.5" stroke="#b8b8b8" stroke-width="1"/></svg>
<div class="t" style="left:152.75px;top:396.69px;font-size:11px;line-height:11px;font-weight:bold;-webkit-text-stroke:0.3px #111;color:#111;letter-spacing:0.238px;">Direct Cost Escalation</div>
<div class="t" style="left:392.25px;top:396.69px;font-size:11px;line-height:11px;color:#1c1c1c;letter-spacing:-0.3px;transform:scaleX(0.9537);transform-origin:0.00px 0;">DIRECT COST ESCALATION</div>
<div class="t" style="left:641.23px;top:396.69px;font-size:11px;line-height:11px;color:#1c1c1c;letter-spacing:-0.2px;">1.00</div>
<div class="t" style="left:674.25px;top:396.69px;font-size:11px;line-height:11px;color:#1c1c1c;letter-spacing:-0.3px;transform:scaleX(0.9238);transform-origin:0.00px 0;">Lump Sum</div>
<div class="t" style="left:769.25px;top:396.69px;font-size:11px;line-height:11px;color:#1c1c1c;letter-spacing:0.05px;">$15,048.80</div>
<div class="t" style="left:862.85px;top:396.69px;font-size:11px;line-height:11px;color:#1c1c1c;letter-spacing:0.05px;">$15,048.80</div>
<div class="b" style="left:29px;top:414px;width:117px;height:22px;background:#f3f3f3;"></div>
<div class="b" style="left:147px;top:414px;width:239px;height:22px;background:#ffffff;"></div>
<div class="b" style="left:387px;top:414px;width:174px;height:22px;background:#ffffff;"></div>
<div class="b" style="left:562px;top:414px;width:106px;height:22px;background:#f3f3f3;"></div>
<div class="b" style="left:669px;top:414px;width:76px;height:22px;background:#f3f3f3;"></div>
<div class="b" style="left:746px;top:414px;width:84px;height:22px;background:#f3f3f3;"></div>
<div class="b" style="left:831px;top:414px;width:93px;height:22px;background:#f3f3f3;"></div>
<div class="b" style="left:925px;top:414px;width:96px;height:22px;background:#f3f3f3;"></div>
<div class="b" style="left:1022px;top:414px;width:2px;height:22px;background:#f3f3f3;"></div>
<div class="b" style="left:28px;top:436px;width:996px;height:1px;background:#d6d6d6;"></div>
<svg class="s" style="left:33px;top:419px" width="9" height="9" viewBox="0 0 9 9"><path d="M4.5 0.5V8.5M0.5 4.5H8.5" stroke="#b8b8b8" stroke-width="1"/></svg>
<div class="t" style="left:152.75px;top:419.69px;font-size:11px;line-height:11px;font-weight:bold;-webkit-text-stroke:0.3px #111;color:#111;letter-spacing:0.389px;">Indirect Cost Add-On</div>
<div class="t" style="left:641.23px;top:419.69px;font-size:11px;line-height:11px;color:#1c1c1c;letter-spacing:-0.2px;">1.00</div>
<div class="t" style="left:674.25px;top:419.69px;font-size:11px;line-height:11px;color:#1c1c1c;letter-spacing:-0.3px;transform:scaleX(0.9238);transform-origin:0.00px 0;">Lump Sum</div>
<div class="t" style="left:775.43px;top:419.69px;font-size:11px;line-height:11px;color:#1c1c1c;letter-spacing:0.05px;">$5,888.67</div>
<div class="t" style="left:869.02px;top:419.69px;font-size:11px;line-height:11px;color:#1c1c1c;letter-spacing:0.05px;">$5,888.67</div>
<div class="t" style="left:953.88px;top:419.69px;font-size:11px;line-height:11px;color:#1c1c1c;letter-spacing:0.05px;">$294,433.42</div>
<div class="b" style="left:29px;top:437px;width:117px;height:22px;background:#f3f3f3;"></div>
<div class="b" style="left:147px;top:437px;width:239px;height:22px;background:#ffffff;"></div>
<div class="b" style="left:387px;top:437px;width:174px;height:22px;background:#ffffff;"></div>
<div class="b" style="left:562px;top:437px;width:106px;height:22px;background:#f3f3f3;"></div>
<div class="b" style="left:669px;top:437px;width:76px;height:22px;background:#f3f3f3;"></div>
<div class="b" style="left:746px;top:437px;width:84px;height:22px;background:#f3f3f3;"></div>
<div class="b" style="left:831px;top:437px;width:93px;height:22px;background:#f3f3f3;"></div>
<div class="b" style="left:925px;top:437px;width:96px;height:22px;background:#f3f3f3;"></div>
<div class="b" style="left:1022px;top:437px;width:2px;height:22px;background:#f3f3f3;"></div>
<div class="b" style="left:28px;top:459px;width:996px;height:1px;background:#d6d6d6;"></div>
<svg class="s" style="left:33px;top:442px" width="9" height="9" viewBox="0 0 9 9"><path d="M4.5 0.5V8.5M0.5 4.5H8.5" stroke="#b8b8b8" stroke-width="1"/></svg>
<div class="t" style="left:152.75px;top:442.69px;font-size:11px;line-height:11px;font-weight:bold;-webkit-text-stroke:0.3px #111;color:#111;letter-spacing:0.319px;">Direct Cost Add-On</div>
<div class="t" style="left:392.25px;top:442.69px;font-size:11px;line-height:11px;color:#1c1c1c;letter-spacing:-0.3px;transform:scaleX(0.9574);transform-origin:0.00px 0;">DIRECT COST ADD-ON</div>
<div class="t" style="left:641.23px;top:442.69px;font-size:11px;line-height:11px;color:#1c1c1c;letter-spacing:-0.2px;">1.00</div>
<div class="t" style="left:674.25px;top:442.69px;font-size:11px;line-height:11px;color:#1c1c1c;letter-spacing:-0.3px;transform:scaleX(0.9238);transform-origin:0.00px 0;">Lump Sum</div>
<div class="t" style="left:763.08px;top:442.69px;font-size:11px;line-height:11px;color:#1c1c1c;letter-spacing:0.05px;">$104,088.34</div>
<div class="t" style="left:856.67px;top:442.69px;font-size:11px;line-height:11px;color:#1c1c1c;letter-spacing:0.05px;">$104,088.34</div>
<div class="t" style="left:944.52px;top:442.69px;font-size:11px;line-height:11px;color:#1c1c1c;letter-spacing:0.05px;">$5,204,417.24</div>
<div class="b" style="left:29px;top:460px;width:117px;height:22px;background:#e68b8b;"></div>
<div class="b" style="left:147px;top:460px;width:239px;height:22px;background:linear-gradient(to right, #e68b8b, #ffffff);"></div>
<div class="b" style="left:387px;top:460px;width:174px;height:22px;background:#ffffff;"></div>
<div class="b" style="left:562px;top:460px;width:106px;height:22px;background:#ffffff;"></div>
<div class="b" style="left:669px;top:460px;width:76px;height:22px;background:#ffffff;"></div>
<div class="b" style="left:746px;top:460px;width:84px;height:22px;background:#f3f3f3;"></div>
<div class="b" style="left:831px;top:460px;width:93px;height:22px;background:#f3f3f3;"></div>
<div class="b" style="left:925px;top:460px;width:96px;height:22px;background:#f3f3f3;"></div>
<div class="b" style="left:1022px;top:460px;width:2px;height:22px;background:#f3f3f3;"></div>
<div class="b" style="left:28px;top:482px;width:996px;height:1px;background:#d6d6d6;"></div>
<svg class="s" style="left:33px;top:465px" width="9" height="9" viewBox="0 0 9 9"><rect x="0.5" y="0.5" width="8" height="8" fill="#5e5e5e" stroke="#7a7a7a"/><rect x="2" y="4" width="5" height="1.4" fill="#fff"/></svg>
<div class="t" style="left:52.50px;top:465.69px;font-size:11px;line-height:11px;font-weight:bold;-webkit-text-stroke:0.3px #1c1c1c;color:#1c1c1c;letter-spacing:0px;">1</div>
<div class="t" style="left:152.75px;top:465.69px;font-size:11px;line-height:11px;font-weight:bold;-webkit-text-stroke:0.3px #111;color:#111;letter-spacing:0.147px;">SITEWORK &amp; ROADWAY</div>
<div class="t" style="left:392.25px;top:465.69px;font-size:11px;line-height:11px;color:#1c1c1c;letter-spacing:-0.2px;">200</div>
<div class="t" style="left:641.23px;top:465.69px;font-size:11px;line-height:11px;color:#1c1c1c;letter-spacing:-0.2px;">1.00</div>
<div class="t" style="left:674.25px;top:465.69px;font-size:11px;line-height:11px;color:#1c1c1c;letter-spacing:-0.3px;">Each</div>
<div class="t" style="left:753.73px;top:465.69px;font-size:11px;line-height:11px;color:#1c1c1c;letter-spacing:0.05px;">$2,464,161.56</div>
<div class="t" style="left:847.32px;top:465.69px;font-size:11px;line-height:11px;color:#1c1c1c;letter-spacing:0.05px;">$2,464,161.56</div>
<div class="b" style="left:29px;top:483px;width:117px;height:22px;background:#a6d3bd;"></div>
<div class="b" style="left:147px;top:483px;width:239px;height:22px;background:linear-gradient(to right, #a6d3bd, #ffffff);"></div>
<div class="b" style="left:387px;top:483px;width:174px;height:22px;background:#ffffff;"></div>
<div class="b" style="left:562px;top:483px;width:106px;height:22px;background:#ffffff;"></div>
<div class="b" style="left:669px;top:483px;width:76px;height:22px;background:#ffffff;"></div>
<div class="b" style="left:746px;top:483px;width:84px;height:22px;background:#ffffff;"></div>
<div class="b" style="left:831px;top:483px;width:93px;height:22px;background:#ffffff;"></div>
<div class="b" style="left:925px;top:483px;width:96px;height:22px;background:#f3f3f3;"></div>
<div class="b" style="left:1022px;top:483px;width:2px;height:22px;background:#f3f3f3;"></div>
<div class="b" style="left:28px;top:505px;width:996px;height:1px;background:#d6d6d6;"></div>
<svg class="s" style="left:33px;top:488px" width="9" height="9" viewBox="0 0 9 9"><path d="M4.5 0.5V8.5M0.5 4.5H8.5" stroke="#333" stroke-width="1"/></svg>
<div class="t" style="left:52.50px;top:488.69px;font-size:11px;line-height:11px;color:#1c1c1c;letter-spacing:-0.125px;">1.1</div>
<div class="t" style="left:164.25px;top:488.69px;font-size:11px;line-height:11px;color:#1c1c1c;letter-spacing:-0.284px;">Mobilization</div>
<div class="t" style="left:392.25px;top:488.69px;font-size:11px;line-height:11px;color:#1c1c1c;letter-spacing:-0.125px;">641 0100</div>
<div class="t" style="left:641.23px;top:488.69px;font-size:11px;line-height:11px;color:#1c1c1c;letter-spacing:-0.2px;">1.00</div>
<div class="t" style="left:674.25px;top:488.69px;font-size:11px;line-height:11px;color:#1c1c1c;letter-spacing:-0.3px;transform:scaleX(0.9238);transform-origin:0.00px 0;">Lump Sum</div>
<div class="t" style="left:770.00px;top:488.69px;font-size:11px;line-height:11px;color:#1c1c1c;letter-spacing:0.05px;">$11,909.51</div>
<div class="t" style="left:863.60px;top:488.69px;font-size:11px;line-height:11px;color:#1c1c1c;letter-spacing:0.05px;">$11,909.51</div>
<div class="b" style="left:29px;top:506px;width:117px;height:22px;background:#a6d3bd;"></div>
<div class="b" style="left:147px;top:506px;width:239px;height:22px;background:linear-gradient(to right, #a6d3bd, #ffffff);"></div>
<div class="b" style="left:387px;top:506px;width:174px;height:22px;background:#ffffff;"></div>
<div class="b" style="left:562px;top:506px;width:106px;height:22px;background:#ffffff;"></div>
<div class="b" style="left:669px;top:506px;width:76px;height:22px;background:#ffffff;"></div>
<div class="b" style="left:746px;top:506px;width:84px;height:22px;background:#ffffff;"></div>
<div class="b" style="left:831px;top:506px;width:93px;height:22px;background:#ffffff;"></div>
<div class="b" style="left:925px;top:506px;width:96px;height:22px;background:#f3f3f3;"></div>
<div class="b" style="left:1022px;top:506px;width:2px;height:22px;background:#f3f3f3;"></div>
<div class="b" style="left:28px;top:528px;width:996px;height:1px;background:#d6d6d6;"></div>
<div class="b" style="left:28px;top:226px;width:1px;height:281px;background:#d6d6d6;"></div>
<div class="b" style="left:146px;top:226px;width:1px;height:281px;background:#d6d6d6;"></div>
<div class="b" style="left:386px;top:226px;width:1px;height:281px;background:#d6d6d6;"></div>
<div class="b" style="left:561px;top:226px;width:1px;height:281px;background:#d6d6d6;"></div>
<div class="b" style="left:668px;top:226px;width:1px;height:281px;background:#d6d6d6;"></div>
<div class="b" style="left:745px;top:226px;width:1px;height:281px;background:#d6d6d6;"></div>
<div class="b" style="left:830px;top:226px;width:1px;height:281px;background:#d6d6d6;"></div>
<div class="b" style="left:924px;top:226px;width:1px;height:281px;background:#d6d6d6;"></div>
<div class="b" style="left:1021px;top:226px;width:1px;height:281px;background:#d6d6d6;"></div>
<div class="b" style="left:385px;top:226px;width:1px;height:281px;background:#d6d6d6;"></div>
<div class="b" style="left:568px;top:140px;width:225px;height:116px;background:#ffffff;box-sizing:border-box;border:1px solid #a9a9a9;border-top-color:#a0a0a0;"></div>
<div class="b" style="left:570px;top:228px;width:222px;height:28px;background:#efefef;"></div>
<div class="t" style="left:604.25px;top:149.84px;font-size:12px;line-height:12px;color:#1a1a1a;letter-spacing:-0.223px;">Open MS Project</div>
<div class="t" style="left:604.25px;top:177.84px;font-size:12px;line-height:12px;color:#1a1a1a;letter-spacing:-0.083px;">Update Estimate from Project</div>
<div class="t" style="left:604.25px;top:205.84px;font-size:12px;line-height:12px;color:#1a1a1a;letter-spacing:-0.083px;">Update Project from Estimate</div>
<div class="t" style="left:604.25px;top:233.84px;font-size:12px;line-height:12px;color:#1a1a1a;letter-spacing:-0.172px;">Export Copy of MS Project File</div>
<svg class="s" style="left:575px;top:148px" width="16" height="16" viewBox="0 0 16 16"><path d="M0 2L9 0V16L0 14Z" fill="#22a048"/><rect x="9" y="2" width="7" height="12" fill="#fff" stroke="#22a048" stroke-width="1"/><path d="M2.5 11V4.5H5C6.5 4.5 7 5.5 7 6.5C7 7.5 6.5 8.5 5 8.5H3.5" fill="none" stroke="#fff" stroke-width="1.4"/><path d="M12 4V10M10 8L12 10.5L14 8" fill="none" stroke="#22a048" stroke-width="1.2"/></svg>
<svg class="s" style="left:575px;top:176px" width="16" height="16" viewBox="0 0 16 16"><path d="M6 2L12 0.5V9.5L6 8Z" fill="#22a048"/><rect x="11.5" y="1.5" width="4" height="7" fill="#fff" stroke="#22a048" stroke-width="1"/><path d="M7.5 6.5V3.5H9.5V5H8" fill="none" stroke="#fff" stroke-width="0.9"/><path d="M5.5 3.5C3.5 3.5 2 4.5 2 6.5" fill="none" stroke="#22a048" stroke-width="1.3"/><path d="M0.5 6L2 8L3.5 6Z" fill="#22a048"/><circle cx="4.3" cy="11.7" r="4.3" fill="#1f7ad1"/><path d="M2.3 10.8H6.3M2.3 12.8H6.3M4.3 9V14.5" stroke="#fff" stroke-width="0.8"/></svg>
<svg class="s" style="left:575px;top:204px" width="16" height="16" viewBox="0 0 16 16"><path d="M0.5 8.5L7 7.5V15.5L0.5 14.5Z" fill="#22a048"/><rect x="6.5" y="9" width="3" height="6" fill="#fff" stroke="#22a048" stroke-width="0.8"/><path d="M2 13V10H4V11.5H2.5" fill="none" stroke="#fff" stroke-width="0.9"/><circle cx="11.5" cy="4.5" r="4.5" fill="#1f7ad1"/><path d="M9.3 3.6H13.7M9.3 5.6H13.7M11.5 2V7.5" stroke="#fff" stroke-width="0.8"/><path d="M7 3C4.5 3 3 4 3 6" fill="none" stroke="#1f7ad1" stroke-width="1.3"/><path d="M1.5 5.5L3 7.5L4.5 5.5Z" fill="#1f7ad1"/></svg>
<svg class="s" style="left:575px;top:232px" width="16" height="16" viewBox="0 0 16 16"><path d="M0.5 0.5H12.5L15.5 3.5V15.5H0.5Z" fill="none" stroke="#3d69a2"/><rect x="3.5" y="0.5" width="8" height="4" fill="none" stroke="#3d69a2"/><rect x="2.5" y="8.5" width="11" height="7" fill="none" stroke="#3d69a2"/></svg>
<div class="b" style="left:567px;top:225px;width:227px;height:34px;background:transparent;box-sizing:border-box;border:3px solid #ff0000;"></div>
</body></html>
